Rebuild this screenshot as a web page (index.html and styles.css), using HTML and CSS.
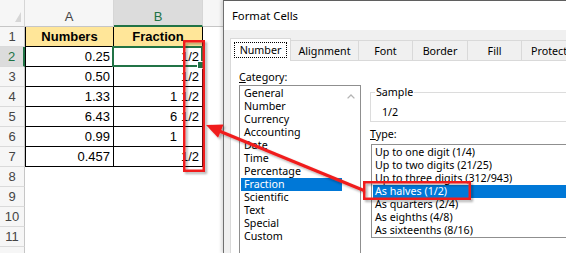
FILE: index.html
```html
<!DOCTYPE html>
<html lang="en">
<head>
<meta charset="utf-8">
<title>Format Cells – Fraction</title>
<link rel="stylesheet" href="styles.css">
</head>
<body>
<div class="screen">
  <div class="sheet">
    <div class="grid">
      <div class="ch corner"></div>
      <div class="ch">A</div>
      <div class="ch ch-sel">B</div>
      <div class="ch ch-c"></div>

      <div class="rh">1</div>
      <div class="c cA hdr">Numbers</div>
      <div class="c hdr">Fraction</div>
      <div class="cc"></div>

      <div class="rh rh-sel">2</div>
      <div class="c cA">0.25</div>
      <div class="c sel">1/2</div>
      <div class="cc"></div>

      <div class="rh">3</div>
      <div class="c cA">0.50</div>
      <div class="c">1/2</div>
      <div class="cc"></div>

      <div class="rh">4</div>
      <div class="c cA">1.33</div>
      <div class="c">1 1/2</div>
      <div class="cc"></div>

      <div class="rh">5</div>
      <div class="c cA">6.43</div>
      <div class="c">6 1/2</div>
      <div class="cc"></div>

      <div class="rh">6</div>
      <div class="c cA">0.99</div>
      <div class="c whole">1</div>
      <div class="cc"></div>

      <div class="rh">7</div>
      <div class="c cA">0.457</div>
      <div class="c">1/2</div>
      <div class="cc"></div>

      <div class="rh">8</div><div class="blank"></div>
      <div class="rh">9</div><div class="blank"></div>
      <div class="rh">10</div><div class="blank"></div>
      <div class="rh">11</div><div class="blank"></div>
      <div class="rh"></div><div class="blank"></div>
    </div>
  </div>

  <div class="dialog">
    <div class="titlebar">Format Cells</div>
    <div class="dbody">
      <div class="tabs">
        <div class="tab active"><span class="focus">Number</span></div>
        <div class="tab t-align">Alignment</div>
        <div class="tab t-font">Font</div>
        <div class="tab t-border">Border</div>
        <div class="tab t-fill">Fill</div>
        <div class="tab t-prot">Protection</div>
      </div>
      <div class="panel">
        <div class="col-left">
          <div class="label"><u>C</u>ategory:</div>
          <div class="listbox cat">
            <ul class="items">
              <li>General</li>
              <li>Number</li>
              <li>Currency</li>
              <li>Accounting</li>
              <li>Date</li>
              <li>Time</li>
              <li>Percentage</li>
              <li class="on">Fraction</li>
              <li>Scientific</li>
              <li>Text</li>
              <li>Special</li>
              <li>Custom</li>
            </ul>
            <div class="scroll">
              <svg class="chev" width="8" height="5" viewBox="0 0 8 5"><polyline points="0.6,4.4 4,1 7.4,4.4" fill="none" stroke="#b4b4b4" stroke-width="1.3"/></svg>
            </div>
          </div>
        </div>
        <div class="col-right">
          <fieldset class="sample">
            <legend>Sample</legend>
            <div class="sample-val">1/2</div>
          </fieldset>
          <div class="label type-label"><u>T</u>ype:</div>
          <div class="listbox type">
            <ul class="items">
              <li>Up to one digit (1/4)</li>
              <li>Up to two digits (21/25)</li>
              <li>Up to three digits (312/943)</li>
              <li class="on">As halves (1/2)</li>
              <li>As quarters (2/4)</li>
              <li>As eighths (4/8)</li>
              <li>As sixteenths (8/16)</li>
            </ul>
          </div>
        </div>
      </div>
    </div>
  </div>

  <svg class="annot" width="566" height="253" viewBox="0 0 566 253">
    <defs>
      <filter id="sh" x="-30%" y="-30%" width="160%" height="160%">
        <feDropShadow dx="2" dy="2" stdDeviation="1.2" flood-color="#000" flood-opacity="0.3"/>
      </filter>
    </defs>
    <g filter="url(#sh)">
      <g fill="none" stroke="#f01e1e">
        <rect x="184.25" y="41.25" width="19.5" height="129.5" stroke-width="2.5"/>
        <rect x="364.25" y="182.25" width="105.5" height="16.5" stroke-width="2.5"/>
        <line x1="218" y1="130.5" x2="364" y2="190.5" stroke-width="3"/>
      </g>
      <polygon points="206,125 223.5,124.4 218.1,137.8" fill="#f01e1e"/>
    </g>
  </svg>
</div>
</body>
</html>
```

FILE: styles.css
```css
* { box-sizing: border-box; }

html, body {
  margin: 0;
  padding: 0;
  background: #fff;
}

.screen {
  position: relative;
  display: flex;
  width: 566px;
  height: 253px;
  overflow: hidden;
}

/* ---------- spreadsheet ---------- */
.sheet {
  flex: none;
  width: 223px;
  font-family: "Liberation Sans", Arial, sans-serif;
  font-size: 13px;
  color: #000;
}

.grid {
  display: grid;
  grid-template-columns: 25px 89px 89px 20px;
  grid-template-rows: 27px repeat(12, 20px);
}

.ch {
  background: #f6f6f6;
  border-bottom: 1px solid #c6c6c6;
  border-right: 1px solid #d6d6d6;
  color: #444;
  text-align: center;
  padding-top: 7px;
  line-height: 19px;
}

.corner { position: relative; }
.corner::after {
  content: "";
  position: absolute;
  right: 3px;
  bottom: 4px;
  width: 6px;
  height: 10px;
  background: #d6d6d6;
  clip-path: polygon(100% 0, 100% 100%, 0 100%);
}

.ch-sel {
  background: #dcdcdc;
  color: #217346;
  border-bottom: 2px solid #217346;
}

.ch-c { border-right: none; }

.rh {
  background: #f6f6f6;
  border-right: 1px solid #c6c6c6;
  border-bottom: 1px solid #dadada;
  color: #444;
  text-align: center;
  line-height: 19px;
}

.rh-sel {
  background: #dcdcdc;
  color: #217346;
  border-right: 2px solid #217346;
}

.c {
  background: #fff;
  border-right: 1px solid #000;
  border-bottom: 1px solid #000;
  text-align: right;
  padding-right: 3px;
  line-height: 19px;
  white-space: nowrap;
}

.cA { border-left: 1px solid #000; }

.hdr {
  background: #ffe699;
  font-weight: bold;
  text-align: center;
  padding-right: 0;
}

.whole { padding-right: 25px; }

.sel { position: relative; }
.sel::before {
  content: "";
  position: absolute;
  left: -2px;
  top: -1px;
  right: -1px;
  bottom: -1px;
  border: 2px solid #217346;
}
.sel::after {
  content: "";
  position: absolute;
  right: -3px;
  bottom: -3px;
  width: 6px;
  height: 6px;
  background: #217346;
  border: 1px solid #fff;
}

.cc { background: #fff; }

.blank {
  grid-column: span 3;
  background: #fff;
}

/* ---------- dialog ---------- */
.dialog {
  flex: none;
  width: 420px;
  display: flex;
  flex-direction: column;
  background: #f0f0f0;
  border-top: 1px solid #5f5f5f;
  border-left: 1px solid #707070;
  box-shadow: -2px 0 3px rgba(0, 0, 0, 0.13);
  font-family: "Noto Sans", "Segoe UI", sans-serif;
  font-size: 10.7px;
  color: #000;
}

.titlebar {
  flex: none;
  height: 29px;
  background: #fff;
  padding-left: 8px;
  line-height: 29px;
  font-size: 11.3px;
}

.dbody {
  flex: 1;
  display: flex;
  flex-direction: column;
  padding: 8px 0 0 6px;
}

.tabs {
  position: relative;
  z-index: 1;
  display: flex;
  align-items: flex-end;
  height: 22px;
}

.tab {
  flex: none;
  height: 20px;
  display: flex;
  align-items: center;
  justify-content: center;
  background: #f0f0f0;
  border: 1px solid #d9d9d9;
  border-left: none;
  border-bottom: none;
  white-space: nowrap;
}

.tab.active {
  width: 61px;
  height: 23px;
  margin-bottom: -1px;
  background: #fff;
  border-left: 1px solid #d9d9d9;
}

.focus {
  border: 1px dotted #000;
  padding: 0 5px;
  line-height: 14px;
}

.t-align { width: 68px; }
.t-font { width: 54px; }
.t-border { width: 55px; }
.t-fill { width: 54px; }
.t-prot { width: 80px; justify-content: flex-start; padding-left: 9px; }

.panel {
  flex: 1;
  display: flex;
  gap: 9px;
  background: #fff;
  border: 1px solid #d9d9d9;
  border-right: none;
  padding: 8px 0 0 8px;
}

.col-left {
  flex: none;
  width: 122px;
}

.label {
  height: 16px;
  line-height: 16px;
  white-space: nowrap;
}

.listbox {
  background: #fff;
  border: 1px solid #8f8f8f;
}

.items {
  list-style: none;
  margin: 0;
  padding: 1px 0 0 0;
}

.items li {
  height: 13px;
  line-height: 13px;
  margin-left: 1px;
  white-space: nowrap;
}

.items li.on {
  background: #0078d7;
  color: #fff;
}

.cat {
  display: flex;
  height: 200px;
}

.cat .items { flex: 1; }
.cat .items li { padding-left: 3px; }

.scroll {
  flex: none;
  width: 18px;
  display: flex;
  justify-content: center;
  align-items: flex-start;
  padding-top: 8px;
}

.chev { display: block; }

.col-right {
  flex: 1;
  display: flex;
  flex-direction: column;
  align-items: flex-start;
}

.sample {
  margin: 16px 0 0 0;
  width: 260px;
  min-width: 0;
  border: 1px solid #dcdcdc;
  padding: 0 0 2px 4px;
}

.sample legend {
  padding: 0 1px;
  line-height: 14px;
}

.sample-val {
  margin: 6px 0 0 7px;
  line-height: 14px;
}

.type-label { margin-top: 4px; }

.type {
  margin: 2px 0 0 1px;
  width: 260px;
}

.type .items li { padding-left: 2px; }

/* ---------- annotations ---------- */
.annot {
  position: absolute;
  left: 0;
  top: 0;
  pointer-events: none;
}
```
